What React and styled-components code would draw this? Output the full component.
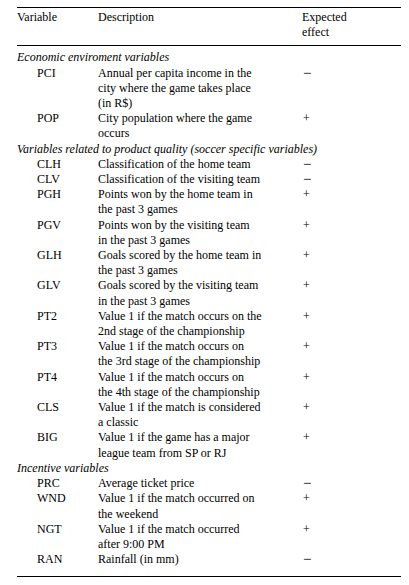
import styled, { createGlobalStyle } from "styled-components";

const GlobalStyle = createGlobalStyle`
  html, body {
    margin: 0;
    padding: 0;
    background: #fff;
  }
  body {
    font-family: "Liberation Serif", "Times New Roman", serif;
    color: #000;
    overflow: hidden;
  }
`;

const groups = [
  {
    title: "Economic enviroment variables",
    rows: [
      { code: "PCI", desc: ["Annual per capita income in the", "city where the game takes place", "(in R$)"], sign: "-" },
      { code: "POP", desc: ["City population where the game", "occurs"], sign: "+" },
    ],
  },
  {
    title: "Variables related to product quality (soccer specific variables)",
    rows: [
      { code: "CLH", desc: ["Classification of the home team"], sign: "-" },
      { code: "CLV", desc: ["Classification of the visiting team"], sign: "-" },
      { code: "PGH", desc: ["Points won by the home team in", "the past 3 games"], sign: "+" },
      { code: "PGV", desc: ["Points won by the visiting team", "in the past 3 games"], sign: "+" },
      { code: "GLH", desc: ["Goals scored by the home team in", "the past 3 games"], sign: "+" },
      { code: "GLV", desc: ["Goals scored by the visiting team", "in the past 3 games"], sign: "+" },
      { code: "PT2", desc: ["Value 1 if the match occurs on the", "2nd stage of the championship"], sign: "+" },
      { code: "PT3", desc: ["Value 1 if the match occurs on", "the 3rd stage of the championship"], sign: "+" },
      { code: "PT4", desc: ["Value 1 if the match occurs on", "the 4th stage of the championship"], sign: "+" },
      { code: "CLS", desc: ["Value 1 if the match is considered", "a classic"], sign: "+" },
      { code: "BIG", desc: ["Value 1 if the game has a major", "league team from SP or RJ"], sign: "+" },
    ],
  },
  {
    title: "Incentive variables",
    rows: [
      { code: "PRC", desc: ["Average ticket price"], sign: "-" },
      { code: "WND", desc: ["Value 1 if the match occurred on", "the weekend"], sign: "+" },
      { code: "NGT", desc: ["Value 1 if the match occurred", "after 9:00 PM"], sign: "+" },
      { code: "RAN", desc: ["Rainfall (in mm)"], sign: "-" },
    ],
  },
];

const App = () => {
  return (
    <>
      <GlobalStyle />
      <Page>
        <Caption>
          <CaptionText>Table 1 Explanatory variables and expected signs</CaptionText>
        </Caption>
        <Table>
          <Header>
            <HeadCell>Variable</HeadCell>
            <HeadCell>Description</HeadCell>
            <HeadCell>
              Expected
              <br />
              effect
            </HeadCell>
          </Header>
          <Body>
            {groups.map((group) => (
              <Group key={group.title}>
                <GroupTitle>{group.title}</GroupTitle>
                {group.rows.map((row) => (
                  <Row key={row.code}>
                    <Code>{row.code}</Code>
                    <Description>
                      {row.desc.map((line) => (
                        <Line key={line}>{line}</Line>
                      ))}
                    </Description>
                    <Sign minus={row.sign === "-"}>
                      {row.sign === "-" ? "\u2212" : "+"}
                    </Sign>
                  </Row>
                ))}
              </Group>
            ))}
          </Body>
        </Table>
      </Page>
    </>
  );
};

export default App;

const Page = styled.div`
  width: 409px;
  height: 585px;
  padding-left: 17px;
  box-sizing: border-box;
`;

// the caption sits above the crop: only its descenders peek in
const Caption = styled.div`
  display: flex;
  align-items: flex-end;
  height: 3px;
  overflow: hidden;
`;

const CaptionText = styled.div`
  flex: none;
  font-size: 11px;
  line-height: 11px;
  height: 11px;
  margin-bottom: 4px;
  white-space: nowrap;
`;

const Table = styled.div`
  width: 384px;
  margin-top: 4px;
  border-top: 1px solid #000;
  border-bottom: 1px solid #000;
  font-size: 12px;
  line-height: 15.2px;
`;

const Header = styled.div`
  display: grid;
  grid-template-columns: 81px 204px 1fr;
  padding: 2px 0 5px;
  border-bottom: 1px solid #000;
`;

const HeadCell = styled.div``;

const Body = styled.div`
  padding: 4px 0 9px;
`;

const Group = styled.div``;

const GroupTitle = styled.div`
  font-style: italic;
`;

const Row = styled.div`
  display: grid;
  grid-template-columns: 81px 204px 1fr;
`;

const Code = styled.div`
  padding-left: 20px;
`;

const Description = styled.div``;

const Line = styled.div`
  white-space: nowrap;
`;

const Sign = styled.div`
  font-size: ${(props) => (props.minus ? "15px" : "12px")};
  line-height: 15.2px;
  padding-left: 1px;
`;
